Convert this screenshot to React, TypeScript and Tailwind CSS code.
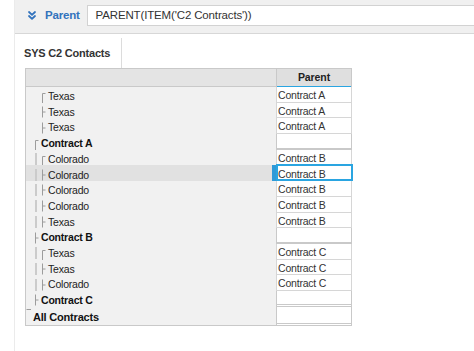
import React from "react";

type Conn = "first" | "mid" | "root";
interface Row {
  label: string;
  depth: 0 | 1 | 2;
  conn: Conn;
  bar?: boolean;
  bold?: boolean;
  parent: string;
  kind?: "group" | "groupEnd" | "total";
  selected?: boolean;
}

const rows: Row[] = [
  { label: "Texas", depth: 2, conn: "first", parent: "Contract A" },
  { label: "Texas", depth: 2, conn: "mid", parent: "Contract A" },
  { label: "Texas", depth: 2, conn: "mid", parent: "Contract A" },
  { label: "Contract A", depth: 1, conn: "first", bold: true, parent: "", kind: "group" },
  { label: "Colorado", depth: 2, conn: "first", bar: true, parent: "Contract B" },
  { label: "Colorado", depth: 2, conn: "mid", bar: true, parent: "Contract B", selected: true },
  { label: "Colorado", depth: 2, conn: "mid", bar: true, parent: "Contract B" },
  { label: "Colorado", depth: 2, conn: "mid", bar: true, parent: "Contract B" },
  { label: "Texas", depth: 2, conn: "mid", bar: true, parent: "Contract B" },
  { label: "Contract B", depth: 1, conn: "mid", bold: true, parent: "", kind: "group" },
  { label: "Texas", depth: 2, conn: "first", bar: true, parent: "Contract C" },
  { label: "Texas", depth: 2, conn: "mid", bar: true, parent: "Contract C" },
  { label: "Colorado", depth: 2, conn: "mid", bar: true, parent: "Contract C" },
  { label: "Contract C", depth: 1, conn: "mid", bold: true, parent: "", kind: "groupEnd" },
  { label: "All Contracts", depth: 0, conn: "root", bold: true, parent: "", kind: "total" },
];

function Connector({ row }: { row: Row }) {
  const w = row.depth === 2 ? 22 : row.depth === 1 ? 15 : 7;
  const cx = row.depth === 2 ? 16.5 : 9.5;
  const line = "#9c9c9c";
  return (
    <svg width={w} height="16" viewBox={`0 0 ${w} 16`} className="shrink-0">
      {row.bar && <rect x="9" y="2" width="2" height="12" fill="#cbcbcb" />}
      {row.conn === "first" && (
        <path d={`M${cx} 15 V5.5 H${cx + 3}`} stroke={line} strokeWidth="1" fill="none" />
      )}
      {row.conn === "mid" && (
        <path d={`M${cx} 2.5 V13.5 M${cx} 8 H${cx + 3}`} stroke={line} strokeWidth="1" fill="none" />
      )}
      {row.conn === "root" && <path d="M0.5 1.5 H5" stroke={line} strokeWidth="1" fill="none" />}
    </svg>
  );
}

export default function App() {
  return (
    <div className="flex h-[351px] w-[474px] overflow-hidden bg-white font-['Liberation_Sans',Arial,sans-serif] text-[#222]">
      <div className="w-[15px] shrink-0 border-r border-[#ebebeb]" />
      <div className="flex min-w-0 flex-1 flex-col">
        {/* top bar */}
        <div className="flex h-[34px] shrink-0 items-start border-b border-[#d7d7d7] bg-[#f0f0f0] pl-[13px] pt-[5px]">
          <div className="flex h-[21px] items-center">
            <svg width="8" height="9" viewBox="0 0 8 9" className="shrink-0">
              <path d="M1 1 L4 3.8 L7 1 M1 5 L4 7.8 L7 5" stroke="#3273bd" strokeWidth="1.8" fill="none" strokeLinecap="round" strokeLinejoin="round" />
            </svg>
            <span className="ml-[9px] text-[11.5px] font-bold tracking-[-0.2px] text-[#3273bd]">Parent</span>
          </div>
          <div className="ml-[7px] flex h-[21px] flex-1 items-center border border-r-0 border-[#d2d2d2] bg-white pl-[8px] text-[11.5px] tracking-[-0.15px] text-[#333]">
            PARENT(ITEM('C2 Contracts'))
          </div>
        </div>

        {/* tab */}
        <div className="mt-[4px] flex h-[30px] w-[107px] shrink-0 items-center border-r border-[#dcdcdc] pl-[9px] text-[11px] font-bold tracking-[-0.2px] text-[#333]">
          SYS C2 Contacts
        </div>

        {/* table */}
        <div className="ml-[10px] flex w-[327px] flex-col">
          <div className="flex h-[19px]">
            <div className="w-[251px] border-l border-t border-b border-[#c9c9c9] bg-[#e4e4e4]" />
            <div className="flex w-[76px] flex-col border-x border-t border-[#c9c9c9] bg-[#dfdfdf]">
              <div className="flex flex-1 items-center justify-center pt-[1px] text-[10.5px] font-bold tracking-[-0.1px] text-[#222]">Parent</div>
              <div className="h-[4px] bg-[#2aa5e1]" />
            </div>
          </div>
          {rows.map((r, i) => {
            const last = r.kind === "total";
            const rowH = last ? "h-[19px]" : "h-[15.7px]";
            let cellBorder = "border-b border-[#d6d6d6]";
            if (r.kind === "group") cellBorder = "border-b-2 border-[#a9a9a9]";
            if (r.kind === "groupEnd" || r.kind === "total") cellBorder = "border-b-[3px] border-double border-[#999]";
            return (
              <div key={i} className={`flex ${rowH}`}>
                <div
                  className={`relative flex w-[251px] border-l border-[#c9c9c9] ${
                    last ? "items-start border-b pt-[1px]" : "items-center pt-[3px]"
                  } ${r.selected ? "bg-[#e1e1e1]" : "bg-[#f1f1f1]"}`}
                >
                  <Connector row={r} />
                  <span
                    className={`whitespace-nowrap leading-none ${
                      last
                        ? "mt-[4px] text-[11px] font-bold tracking-[-0.2px] text-[#111]"
                        : r.bold
                        ? "text-[10.5px] font-bold tracking-[-0.2px] text-[#111]"
                        : "text-[10.5px] tracking-[-0.2px] text-[#222]"
                    }`}
                  >
                    {r.label}
                  </span>
                  {r.selected && <div className="absolute right-0 top-0 h-full w-[4px] bg-[#2f9ad8]" />}
                </div>
                <div
                  className={`flex w-[76px] items-center border-x border-[#c9c9c9] bg-white pl-[1px] pt-[2px] text-[10.5px] leading-none tracking-[-0.2px] text-[#333] ${cellBorder} ${
                    r.selected ? "relative" : ""
                  }`}
                >
                  {r.parent}
                  {r.selected && (
                    <div className="absolute -left-[1px] -right-[2px] -top-[1px] -bottom-[1px] border-2 border-[#2aa5e1]" />
                  )}
                </div>
              </div>
            );
          })}
        </div>
      </div>
    </div>
  );
}
